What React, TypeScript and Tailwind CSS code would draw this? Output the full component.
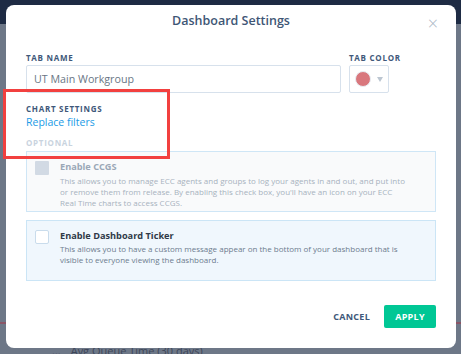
import React from 'react'

const labelCls = "text-[8px] font-bold leading-[12px] tracking-[0.09em] uppercase text-[#40587a]"

export default function App() {
  return (
    <div className="relative h-[354px] w-[461px] overflow-hidden bg-[#6d7787] font-['Open_Sans',sans-serif]">
      {/* dimmed page behind */}
      <div className="h-[24px] bg-[#1e2b44]" />
      <div className="absolute bottom-[30px] left-0 h-[2px] w-full bg-[#8a5566]" />
      <div className="absolute bottom-[-4px] left-[52px] flex gap-[10px] text-[11px] leading-[14px] text-[#3d4658]">
        <span>...</span>
        <span>Avg Queue Time (30 days)</span>
      </div>

      {/* modal */}
      <div className="absolute left-[6px] top-[5px] flex h-[343px] w-[450px] flex-col rounded-[8px] bg-white px-[20px]">
        <div className="relative flex h-[32px] items-center justify-center">
          <h2 className="text-[12.5px] font-semibold leading-none text-[#3e5675]">Dashboard Settings</h2>
          <span className="absolute right-[-2px] top-[9px] text-[18px] font-light leading-none text-[#a9b6c4]">×</span>
        </div>

        <div className="mt-[15px] flex gap-[8px]">
          <div className="flex-1">
            <div className={labelCls}>Tab Name</div>
            <div className="mt-[1px] flex h-[28px] items-center rounded-[2px] border border-[#d7e1ec] px-[7px] text-[10.7px] text-[#6a7685]">
              UT Main Workgroup
            </div>
          </div>
          <div className="w-[87px]">
            <div className={labelCls}>Tab Color</div>
            <div className="mt-[1px] flex h-[28px] w-[40px] items-center gap-[6px] rounded-[2px] border border-[#d7e1ec] pl-[5px]">
              <span className="h-[16px] w-[16px] rounded-full border border-[#e8eef4] bg-[#d9777d]" />
              <svg width="6" height="5" viewBox="0 0 6 5"><path d="M0 0h6L3 5z" fill="#bcc6d1" /></svg>
            </div>
          </div>
        </div>

        <div className="mt-[10px]">
          <div className={labelCls}>Chart Settings</div>
          <div className="text-[10.5px] leading-[14px] text-[#1a9be6]">Replace filters</div>
        </div>

        <div className="mt-[8px] text-[8px] font-bold leading-[12px] tracking-[0.09em] uppercase text-[#c9d3de]">Optional</div>

        <div className="mt-[2px] flex h-[61px] gap-[11px] border border-[#cfe6f6] bg-[#f9fafb] pl-[8px] pr-[27px] pt-[8px]">
          <span className="mt-[1px] h-[14px] w-[14px] shrink-0 rounded-[1px] bg-[#d2dae4]" />
          <div>
            <div className="text-[9.2px] font-bold leading-[13px] text-[#9ba8b7]">Enable CCGS</div>
            <p className="mt-[2px] text-[8px] leading-[11px] text-[#a7b2be]">
              This allows you to manage ECC agents and groups to log your agents in and out, and put into or remove them from release. By enabling this check box, you'll have an icon on your ECC Real Time charts to access CCGS.
            </p>
          </div>
        </div>

        <div className="mt-[8px] flex h-[61px] gap-[11px] border border-[#cbe5f6] bg-[#f0f7fd] pl-[8px] pr-[27px] pt-[8px]">
          <span className="mt-[1px] h-[14px] w-[14px] shrink-0 rounded-[2px] border border-[#c9dcec] bg-white" />
          <div>
            <div className="text-[9.2px] font-bold leading-[13px] text-[#2f3a48]">Enable Dashboard Ticker</div>
            <p className="mt-[1px] text-[8px] leading-[11px] text-[#6d7c8e]">
              This allows you to have a custom message appear on the bottom of your dashboard that is visible to everyone viewing the dashboard.
            </p>
          </div>
        </div>

        <div className="mt-[24px] flex items-center justify-end gap-[14px]">
          <button className="text-[9px] font-bold tracking-[0.03em] text-[#40587a]">CANCEL</button>
          <button className="flex h-[23px] w-[52px] items-center justify-center rounded-[2px] bg-[#00c795] text-[9px] font-bold tracking-[0.03em] text-white">
            APPLY
          </button>
        </div>
      </div>

      {/* annotation highlight */}
      <div className="absolute left-[3px] top-[89px] h-[70px] w-[167px] border-[3px] border-[#f2403f]" />
    </div>
  )
}
